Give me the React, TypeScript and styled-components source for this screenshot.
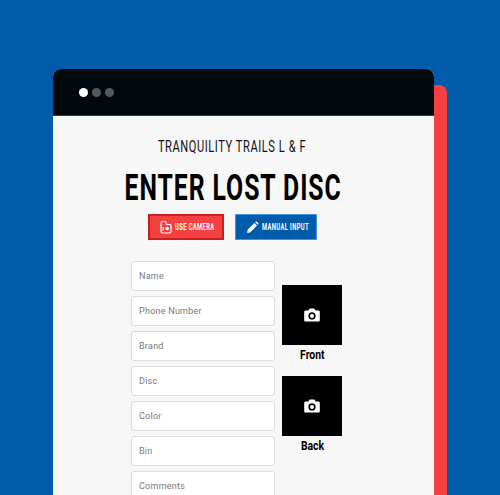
import React from "react";
import styled, { createGlobalStyle } from "styled-components";

const Global = createGlobalStyle`
  html, body { margin: 0; padding: 0; height: 100%; overflow: hidden; background: #005baa; }
  * { box-sizing: border-box; }
`;
const condensed = `"Roboto", "Liberation Sans", sans-serif`;

const Page = styled.div`
  width: 500px; height: 495px; overflow: hidden; background: #005baa; padding: 69px 0 0 53px;
`;
const Window = styled.div`
  width: 381px; height: 500px; border-radius: 8px 8px 0 0; background: #f7f7f7;
  box-shadow: 13px 16px 0 #f44040;
  overflow: hidden;
`;
const TitleBar = styled.div`
  height: 47px; background: #01090f; display: flex; align-items: center; gap: 4px; padding: 0 0 0 26px;
  border-bottom: 1px solid #3a3a40;
`;
const Dot = styled.span<{ $on?: boolean }>`
  width: 9px; height: 9px; border-radius: 50%; background: ${p => (p.$on ? "#fff" : "#55595c")};
`;
const Body = styled.div`
  display: flex; flex-direction: column; align-items: center; padding: 20px 23px 0 0;
`;
const Venue = styled.h2`
  margin: 0; font: 400 17px/20px ${condensed}; letter-spacing: 0.9px; color: #111; white-space: nowrap;
  transform: scaleX(0.65);
`;
const Heading = styled.h1`
  margin: 11px 0 0 2px; font: 700 37px/42px ${condensed}; letter-spacing: 1.4px; color: #000; white-space: nowrap;
  transform: scaleX(0.67);
`;
const Actions = styled.div`
  display: flex; gap: 11px; margin-top: 5px;
`;
const ActionButton = styled.button<{ $tone: "red" | "blue" }>`
  height: 26px; padding: 0 0 0 ${p => (p.$tone === "red" ? "10px" : "11px")}; display: flex; align-items: center; gap: 3px;
  width: ${p => (p.$tone === "red" ? "76px" : "82px")};
  background: ${p => (p.$tone === "red" ? "#f44040" : "#005baa")};
  border: ${p => (p.$tone === "red" ? "2px solid #c81e24" : "1px solid #3d95e6")};
  color: #fff;
`;
const ActionLabel = styled.span`
  display: block; width: 0; font: 700 9px/1 ${condensed}; letter-spacing: 0.55px; white-space: nowrap;
  transform: scaleX(0.65); transform-origin: left center;
`;
const Content = styled.div`
  display: flex; gap: 7px; margin: 21px 0 0 9px;
`;
const Fields = styled.div`
  display: flex; flex-direction: column; gap: 5px; width: 144px;
`;
const Field = styled.input`
  width: 144px; height: 30px; border: 1px solid #dcdcdc; border-radius: 3px; background: #fff; padding: 0 7px;
  font: 400 9px/1 "Roboto", sans-serif; letter-spacing: 0.25px; outline: 0;
  &::placeholder { color: #777; opacity: 1; }
`;
const Photos = styled.div`
  display: flex; flex-direction: column; padding-top: 24px; width: 60px;
`;
const Photo = styled.div`
  display: flex; flex-direction: column; align-items: center; margin-bottom: 14px;
`;
const PhotoBox = styled.div`
  width: 60px; height: 60px; background: #000; display: flex; align-items: center; justify-content: center;
`;
const PhotoLabel = styled.span`
  margin-top: 3px; height: 14px; font: 700 13px/14px ${condensed}; color: #000; transform: scaleX(0.8);
`;

const CameraIcon = () => (
  <svg width="20" height="20" viewBox="0 0 20 20">
    <path fillRule="evenodd" fill="#fff" d="M3.6 5.5h2.8l1-1.7c.2-.3.4-.4.7-.4h3.8c.3 0 .5.1.7.4l1 1.700h2.800c.8 0 1.400.6 1.400 1.400v8.300c0 .8-.6 1.400-1.400 1.400H3.600c-.8 0-1.400-.6-1.400-1.400V6.900c0-.8.6-1.400 1.400-1.400zM10 7.300a3.600 3.600 0 1 0 0 7.200 3.600 3.600 0 0 0 0-7.200zm0 1.600a2 2 0 1 1 0 4 2 2 0 0 1 0-4z" />
  </svg>
);
const SmallCameraIcon = () => (
  <svg width="12" height="14" viewBox="0 0 12 14">
    <path fill="none" stroke="#fff" strokeWidth="1.200" d="M1 3.500V11.500Q1 13 2.500 13H9.500Q11 13 11 11.500V5.500Q11 4.500 10 4.500H6.500L5.500 1.500H2.500Q1 1.500 1 3.500z" />
    <circle cx="7.200" cy="8.500" r="1.700" fill="#fff" />
    <path stroke="#fff" strokeWidth="1.200" d="M3.200 7v3.500" />
  </svg>
);
const PencilIcon = () => (
  <svg width="12" height="12" viewBox="0 0 12 12">
    <path fill="#fff" d="M.6 8.800 7.400 2l2.600 2.600-6.800 6.800-3 .6zM8.200 1.200l.6-.6c.3-.3.7-.3 1 0l1.600 1.600c.3.300.3.700 0 1l-.6.600z" />
  </svg>
);

const fields = ["Name", "Phone Number", "Brand", "Disc", "Color", "Bin", "Comments"];

export default function App() {
  return (
    <Page>
      <Global />
      <Window>
        <TitleBar>
          <Dot $on />
          <Dot />
          <Dot />
        </TitleBar>
        <Body>
          <Venue>TRANQUILITY TRAILS L &amp; F</Venue>
          <Heading>ENTER LOST DISC</Heading>
          <Actions>
            <ActionButton $tone="red"><SmallCameraIcon /><ActionLabel>USE CAMERA</ActionLabel></ActionButton>
            <ActionButton $tone="blue"><PencilIcon /><ActionLabel>MANUAL INPUT</ActionLabel></ActionButton>
          </Actions>
          <Content>
            <Fields>
              {fields.map(f => <Field key={f} placeholder={f} readOnly />)}
            </Fields>
            <Photos>
              <Photo>
                <PhotoBox><CameraIcon /></PhotoBox>
                <PhotoLabel>Front</PhotoLabel>
              </Photo>
              <Photo>
                <PhotoBox><CameraIcon /></PhotoBox>
                <PhotoLabel>Back</PhotoLabel>
              </Photo>
            </Photos>
          </Content>
        </Body>
      </Window>
    </Page>
  );
}
